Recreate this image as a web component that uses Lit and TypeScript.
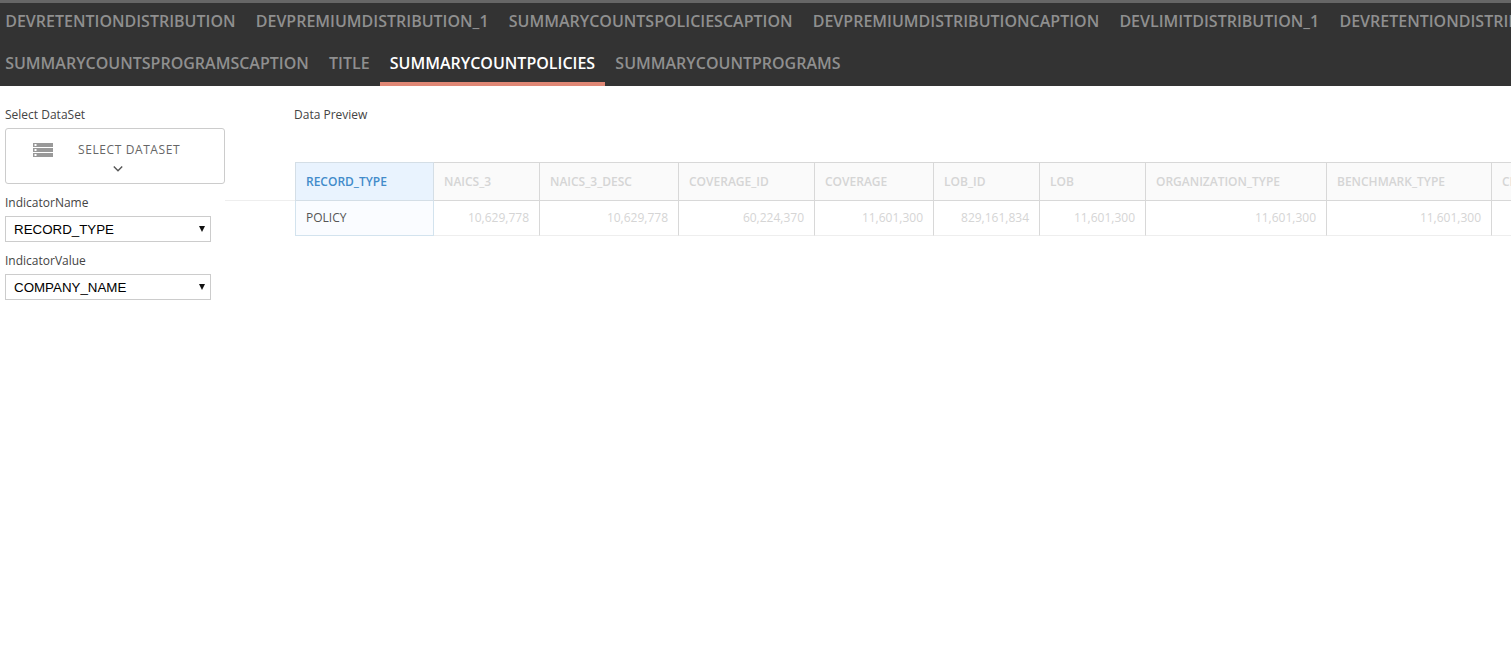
import { LitElement, html, css } from "lit";
import { customElement } from "lit/decorators.js";

const row1 = ["DEVRETENTIONDISTRIBUTION", "DEVPREMIUMDISTRIBUTION_1", "SUMMARYCOUNTSPOLICIESCAPTION", "DEVPREMIUMDISTRIBUTIONCAPTION", "DEVLIMITDISTRIBUTION_1", "DEVRETENTIONDISTRIBUTION_1"];
const row2 = ["SUMMARYCOUNTSPROGRAMSCAPTION", "TITLE", "SUMMARYCOUNTPOLICIES", "SUMMARYCOUNTPROGRAMS"];
const cols: [string, string, number][] = [
  ["NAICS_3", "10,629,778", 106],
  ["NAICS_3_DESC", "10,629,778", 139],
  ["COVERAGE_ID", "60,224,370", 136],
  ["COVERAGE", "11,601,300", 119],
  ["LOB_ID", "829,161,834", 106],
  ["LOB", "11,601,300", 106],
  ["ORGANIZATION_TYPE", "11,601,300", 181],
  ["BENCHMARK_TYPE", "11,601,300", 165],
  ["CLASS_CODE", "11,601,300", 120],
];

@customElement("app-root")
export class AppRoot extends LitElement {
  static styles = css`
    :host { display: block; width: 1511px; height: 648px; overflow: hidden; background: #fff; font-family: "Open Sans", sans-serif; color: #333; }
    .bar { background: #333; border-top: 3px solid #666; box-sizing: border-box; height: 86px; }
    .tabs { display: flex; flex-wrap: nowrap; height: 39px; white-space: nowrap; margin-left: -5px; }
    .tabs.second { height: 44px; }
    .tab { padding: 3px 10px 0 10.2px; font-size: 16px; font-weight: 600; color: #8f8f8f; line-height: 30px; height: 100%; box-sizing: border-box; }
    .second .tab { padding-top: 6px; }
    .tab.active { color: #fff; border-bottom: 4px solid #e08775; }
    .main { display: flex; align-items: flex-start; position: relative; }
    .left { width: 225px; padding: 21px 0 0 5px; box-sizing: border-box; flex: none; }
    .label { font-size: 12px; line-height: 16px; color: #444; }
    .ds { width: 220px; height: 56px; margin-top: 5px; border: 1px solid #ccc; border-radius: 3px; box-sizing: border-box; display: flex; flex-direction: column; align-items: flex-start; padding: 12px 0 0 27px; }
    .ds-top { display: flex; align-items: center; font-size: 12px; letter-spacing: 0.6px; color: #666; line-height: 17px; }
    .ds-top svg { margin-right: 25px; }
    .chev { margin: 8px 0 0 80px; display: block; }
    .l2 { margin-top: 11px; }
    .l3 { margin-top: 11px; }
    .sel { position: relative; width: 206px; height: 26px; margin-top: 5px; }
    .sel::after { content: ""; position: absolute; right: 6px; top: 10px; border-left: 3px solid transparent; border-right: 3px solid transparent; border-top: 6px solid #111; pointer-events: none; }
    select { appearance: none; -webkit-appearance: none; display: block; width: 100%; height: 100%; border: 1px solid #ccc; border-radius: 0; background: #fff; font-family: "Liberation Sans", Arial, sans-serif; font-size: 13.33px; color: #000; padding: 0 8px; box-sizing: border-box; }
    .line { position: absolute; left: 225px; top: 114px; width: 70px; height: 1px; background: #eee; }
    .right { padding: 21px 0 0 70px; flex: none; }
    .title { font-size: 12px; line-height: 16px; color: #444; margin-left: -1px; }
    table { margin-top: 39px; border-collapse: separate; border-spacing: 0; table-layout: fixed; font-size: 12px; }
    th, td { box-sizing: border-box; padding: 0 10px; border-right: 1px solid #d8d8d8; overflow: hidden; white-space: nowrap; }
    th { height: 39px; text-align: left; font-weight: 600; color: #d5d5d5; background: #fafafa; border-top: 1px solid #d8d8d8; border-bottom: 1px solid #d8d8d8; }
    td { height: 35px; padding-bottom: 2px; text-align: right; color: #d5d5d5; border-bottom: 1px solid #eee; }
    th.key { background: #e9f3fe; color: #428bca; border-left: 1px solid #d4dee6; border-color: #d4dee6; }
    td.key { background: #fafcff; color: #555; text-align: left; border-left: 1px solid #d3e3ee; border-right: 1px solid #d3e3ee; border-bottom: 1px solid #d3e3ee; }
  `;

  render() {
    return html`
      <div class="bar">
        <div class="tabs">${row1.map((t) => html`<div class="tab">${t}</div>`)}</div>
        <div class="tabs second">${row2.map((t) => html`<div class="tab ${t === "SUMMARYCOUNTPOLICIES" ? "active" : ""}">${t}</div>`)}</div>
      </div>
      <div class="main">
        <div class="left">
          <div class="label">Select DataSet</div>
          <div class="ds">
            <div class="ds-top">
              <svg width="20" height="14" viewBox="0 0 20 14" fill="#999"><rect y="0" width="20" height="4"/><rect y="5" width="20" height="4"/><rect y="10" width="20" height="4"/><rect x="1.5" y="1" width="2" height="2" fill="#fff"/><rect x="1.5" y="6" width="2" height="2" fill="#fff"/><rect x="1.5" y="11" width="2" height="2" fill="#fff"/></svg>
              SELECT DATASET
            </div>
            <svg class="chev" width="10" height="6" viewBox="0 0 10 6" fill="none" stroke="#555" stroke-width="1.4"><path d="M.8.6 5 4.8 9.2.6"/></svg>
          </div>
          <div class="label l2">IndicatorName</div>
          <div class="sel"><select><option>RECORD_TYPE</option></select></div>
          <div class="label l3">IndicatorValue</div>
          <div class="sel"><select><option>COMPANY_NAME</option></select></div>
        </div>
        <div class="line"></div>
        <div class="right">
          <div class="title">Data Preview</div>
          <table style="width:${139 + cols.reduce((a, c) => a + c[2], 0)}px">
            <colgroup><col style="width:139px" />${cols.map((c) => html`<col style="width:${c[2]}px" />`)}</colgroup>
            <thead><tr><th class="key">RECORD_TYPE</th>${cols.map((c) => html`<th>${c[0]}</th>`)}</tr></thead>
            <tbody><tr><td class="key">POLICY</td>${cols.map((c) => html`<td>${c[1]}</td>`)}</tr></tbody>
          </table>
        </div>
      </div>
    `;
  }
}
